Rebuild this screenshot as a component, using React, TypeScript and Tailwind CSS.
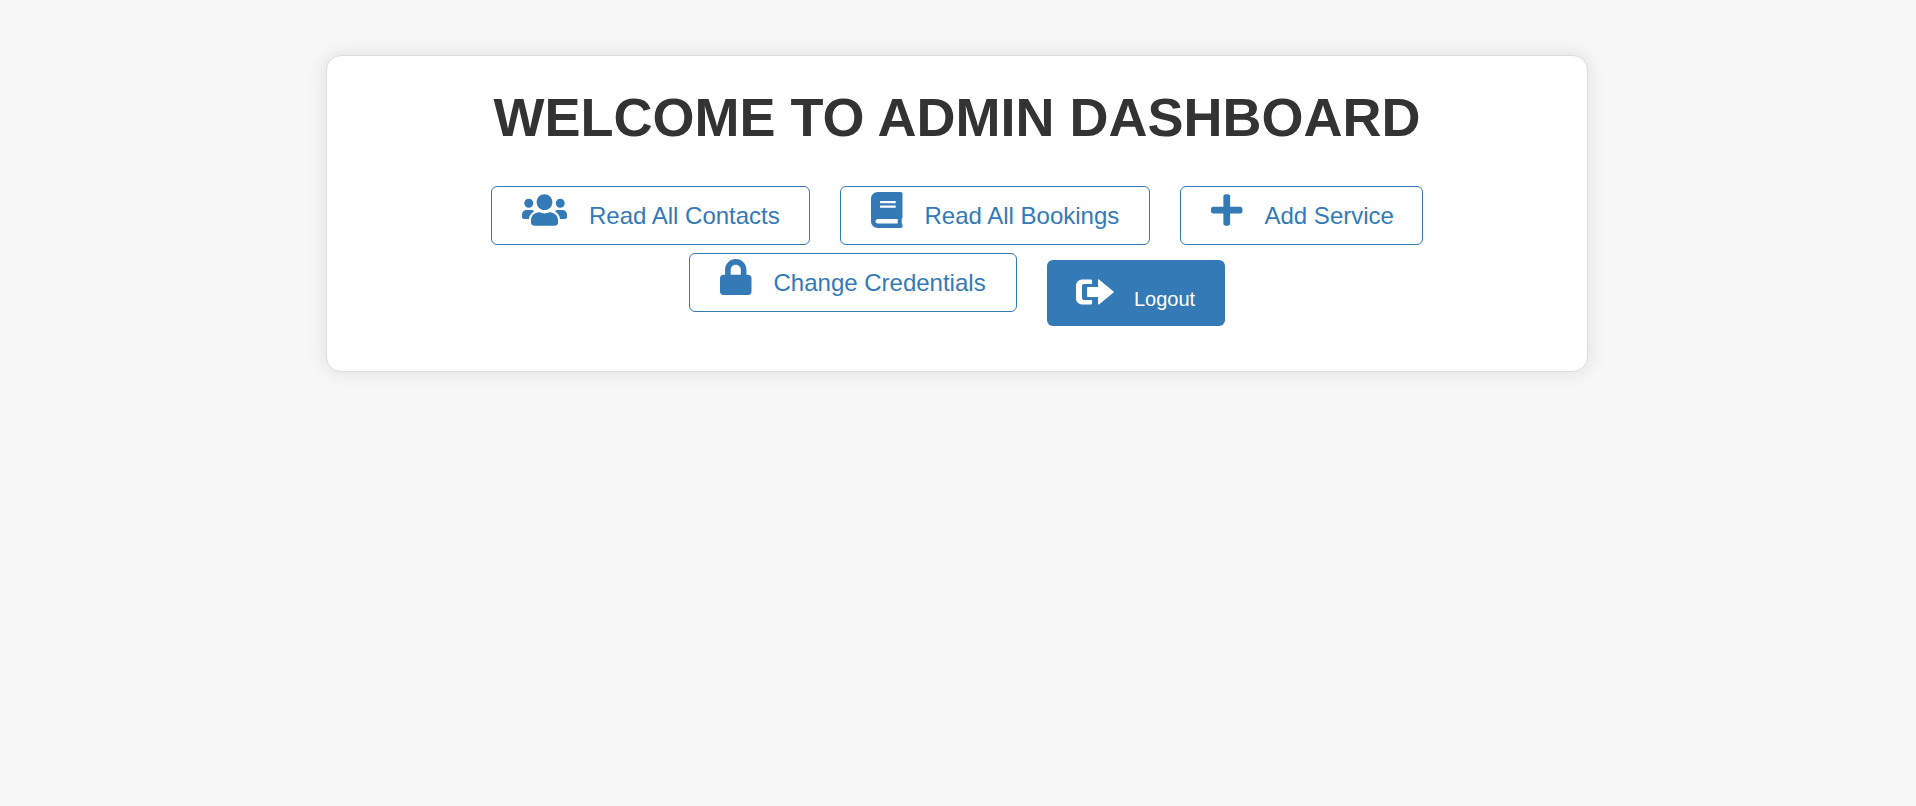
import type { ReactNode } from "react";
import { FaBook, FaLock, FaPlus, FaUsers } from "react-icons/fa";

function LogoutIcon() {
  return (
    <svg width="38" height="26" viewBox="0 0 38 26" fill="currentColor" className="shrink-0">
      <path d="M6 .5h9a1 1 0 0 1 1 1v3.500H8a2 2 0 0 0-2 2v12a2 2 0 0 0 2 2h8v3.500a1 1 0 0 1-1 1H6a6 6 0 0 1-6-6V6.500a6 6 0 0 1 6-6z" />
      <path d="M22 .5a1 1 0 0 1 1 0l14.500 12a.6.6 0 0 1 0 1L23 25.500a1 1 0 0 1-1-.5V18H12a1 1 0 0 1-1-1V9a1 1 0 0 1 1-1h10z" />
    </svg>
  );
}

function NavLink({ icon, label, width }: { icon: ReactNode; label: string; width: string }) {
  return (
    <a
      href="#"
      className={`flex h-[59px] items-start gap-[22px] rounded-[6px] border border-[#337ab7] bg-white pl-[30px] text-[24px] whitespace-nowrap text-[#337ab7] ${width}`}
    >
      <span className="mt-[5px] leading-none">{icon}</span>
      <span className="mt-[15px] leading-[27px]">{label}</span>
    </a>
  );
}

export default function App() {
  return (
    <div className="min-h-[806px] bg-[#f7f7f7] pt-[55px] pr-[2px] font-['Liberation_Sans',Arial,sans-serif]">
      <main className="mx-auto h-[317px] w-[1262px] rounded-[15px] border border-[#ddd] bg-white shadow-[0_0_20px_rgba(0,0,0,0.1)]">
        <h1 className="mt-[29px] mb-[37px] text-center text-[54px] leading-[64px] font-bold text-[#333]">
          WELCOME TO ADMIN DASHBOARD
        </h1>
        <div className="flex flex-wrap items-start justify-center gap-x-[30px] gap-y-[8px]">
          <NavLink width="w-[319px]" icon={<FaUsers className="h-[36px] w-[45px]" />} label="Read All Contacts" />
          <NavLink width="w-[310px]" icon={<FaBook className="h-[36px] w-[31.5px]" />} label="Read All Bookings" />
          <NavLink width="w-[243px]" icon={<FaPlus className="h-[36px] w-[31.5px]" />} label="Add Service" />
          <NavLink width="w-[328px]" icon={<FaLock className="h-[36px] w-[31.5px]" />} label="Change Credentials" />
          <button className="mt-[7px] flex h-[66px] w-[178px] items-start rounded-[6px] bg-[#337ab7] pl-[29px] text-[20px] text-white">
            <span className="mt-[19px]">
              <LogoutIcon />
            </span>
            <span className="mt-[28px] ml-[20px] leading-[23px]">Logout</span>
          </button>
        </div>
      </main>
    </div>
  );
}
